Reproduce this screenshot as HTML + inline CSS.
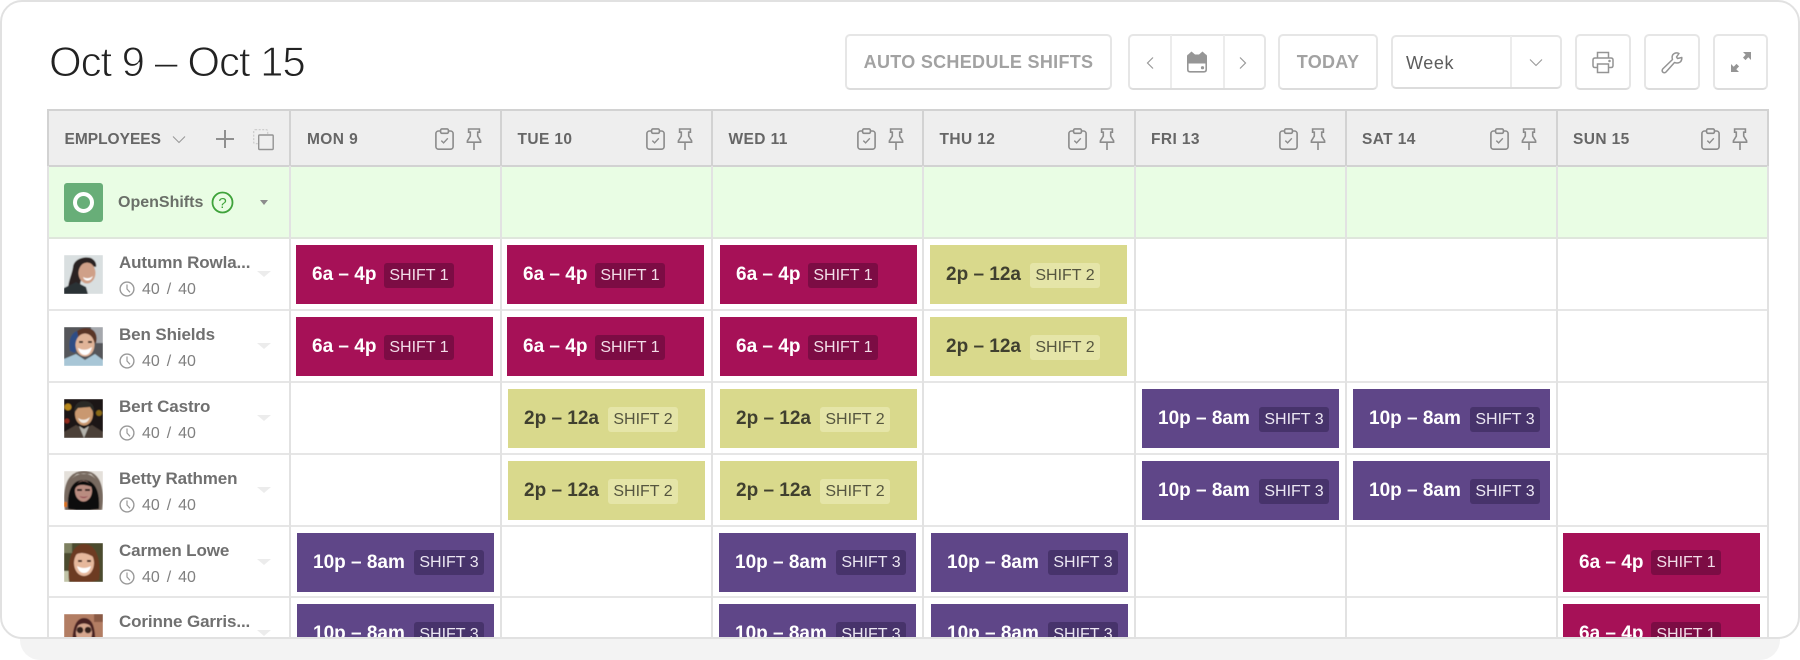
<!DOCTYPE html>
<html lang="en">
<head>
<meta charset="utf-8">
<title>Oct 9 – Oct 15</title>
<style>
html,body{margin:0;padding:0;width:1800px;height:660px;overflow:hidden;background:#fff;font-family:"Liberation Sans",sans-serif}
.a,.a *{box-sizing:border-box}
.a{position:absolute}
#stack{left:20px;top:600px;width:1760px;height:60px;background:#f3f3f3;border-radius:0 0 20px 20px}
#clip{left:0;top:0;width:1800px;height:637px;background:#fff;overflow:hidden;border-radius:22px 22px 20px 20px}
#frame{left:0;top:0;width:1800px;height:639px;border:2px solid #e1e1e1;border-radius:22px}
#title{left:49px;top:37px;font-size:42px;line-height:50px;letter-spacing:-1.08px;color:#222;white-space:nowrap;-webkit-text-stroke:1px #fff}
.btn{position:absolute;top:34px;height:56px;background:#fff;border:2px solid #e6e6e6;border-bottom-color:#dcdcdc;border-radius:5px;font-weight:bold;font-size:18px;line-height:52px;letter-spacing:.3px;color:#a2a2a2;text-align:center;white-space:nowrap}
.v{position:absolute;width:2px}
.h{position:absolute;left:48px;width:1720px;height:2px;background:#e6e6e6}
.dh{position:absolute;top:130px;font-size:15.5px;line-height:20px;font-weight:bold;color:#666;letter-spacing:.4px;white-space:nowrap}
.ic{position:absolute;overflow:visible}
.n{position:absolute;left:119px;font-size:17px;line-height:20px;font-weight:bold;color:#707070;letter-spacing:-.12px;white-space:nowrap}
.w{position:absolute;left:142px;font-size:16px;line-height:20px;color:#808080;word-spacing:2.5px;white-space:nowrap}
.ct{position:absolute;left:257px;width:0;height:0;border-left:7px solid transparent;border-right:7px solid transparent;border-top:6px solid #ececec}
.s{position:absolute;width:197px;height:59px;color:#fff}
.s b{position:absolute;left:16px;top:19px;font-size:19px;line-height:22px;font-weight:bold;white-space:nowrap}
.s i{position:absolute;top:17.5px;width:70px;height:25px;border-radius:3px;font-style:normal;font-size:16px;line-height:25px;text-align:center;letter-spacing:0;white-space:nowrap}
.m{background:#a61157}.m i{left:88px;background:#7c0c44;color:#f3dde8}
.p{background:#5f4688}.p i{left:117px;background:#47336b;color:#ebe6f2}
.y{background:#d9d98c;color:#40402f}.y i{left:100px;background:#e5e5a8;color:#55553f}
.av{position:absolute;left:64px;width:39px;height:39px;display:block}
</style>
</head>
<body>
<svg width="0" height="0" style="position:absolute">
<defs>
<filter id="bl" x="-5%" y="-5%" width="110%" height="110%"><feGaussianBlur stdDeviation=".5"/></filter>
<symbol id="clipb" viewBox="0 0 19 22"><rect x=".9" y="3" width="17.2" height="18.2" rx="2.6" fill="none" stroke="#8b8b8b" stroke-width="1.6"/><rect x="5.6" y=".9" width="7.8" height="4.4" rx="1.4" fill="#eee" stroke="#8b8b8b" stroke-width="1.6"/><path d="M6.3 12.6l2.3 2.3 4.2-4.6" fill="none" stroke="#8b8b8b" stroke-width="1.4"/></symbol>
<symbol id="pin" viewBox="0 0 16 22"><path d="M2.6 1h10.8v3.2h-1.7v4l2.9 4.6v1.4H1.4v-1.4l2.9-4.6v-4H2.6z" fill="none" stroke="#8b8b8b" stroke-width="1.6" stroke-linejoin="miter"/><path d="M8 14v8" stroke="#8b8b8b" stroke-width="1.6"/></symbol>
<symbol id="clock" viewBox="0 0 16 16"><circle cx="8" cy="8" r="6.9" fill="none" stroke="#999" stroke-width="1.4"/><path d="M8 3.5V8l3 3.3" fill="none" stroke="#999" stroke-width="1.2"/></symbol>
</defs>
</svg>

<div class="a" id="stack"></div>

<div class="a" id="clip">
<div class="a" id="title">Oct 9 – Oct 15</div>

<div class="btn" style="left:845px;width:267px">AUTO SCHEDULE SHIFTS</div>
<div class="btn" style="left:1128px;width:138px"></div>
<div class="a" style="left:1170px;top:35px;width:2px;height:53px;background:#ececec"></div>
<div class="a" style="left:1223px;top:35px;width:2px;height:53px;background:#ececec"></div>
<svg class="ic" style="left:1145px;top:56px" width="10" height="14"><path d="M8 1.5L2.500 7 8 12.500" fill="none" stroke="#999" stroke-width="1.200"/></svg>
<svg class="ic" style="left:1238px;top:56px" width="10" height="14"><path d="M2 1.5L7.500 7 2 12.500" fill="none" stroke="#999" stroke-width="1.200"/></svg>
<svg class="ic" style="left:1186px;top:51px" width="22" height="22"><path d="M1 12.500V5.500Q1 3.800 2.500 3.300L5.500 .5 9 3.500H13L16.500 .5 19.500 3.300Q21 3.800 21 5.500V12.500z" fill="#969696"/><path d="M1.800 12V18.500Q1.800 20.800 4 20.800H18Q20.200 20.800 20.200 18.500V12" fill="none" stroke="#969696" stroke-width="1.600"/><circle cx="16.500" cy="16.700" r="1.600" fill="#969696"/></svg>
<div class="btn" style="left:1278px;width:100px">TODAY</div>
<div class="btn" style="left:1391px;top:35px;width:171px;height:54px"></div>
<div class="a" style="left:1406px;top:51px;font-size:18px;line-height:24px;letter-spacing:.6px;color:#5c5c5c">Week</div>
<div class="a" style="left:1510px;top:36px;width:2px;height:51px;background:#ececec"></div>
<svg class="ic" style="left:1529px;top:58px" width="14" height="9"><path d="M1 1.500l6 6 6-6" fill="none" stroke="#999" stroke-width="1.100"/></svg>

<div class="btn" style="left:1575px;width:56px"></div>
<svg class="ic" style="left:1592px;top:51px" width="22" height="23" fill="none" stroke="#949494" stroke-width="1.500"><path d="M5.500 7V1.500H16.500V7"/><path d="M5 16.500H3Q1 16.500 1 14.500V9Q1 7 3 7H19Q21 7 21 9V14.500Q21 16.500 19 16.500H17"/><rect x="5.500" y="13" width="11" height="8.500"/><circle cx="17.500" cy="10" r=".5" fill="#949494"/></svg>
<div class="btn" style="left:1644px;width:56px"></div>
<svg class="ic" style="left:1661px;top:51px" width="22" height="23" fill="none" stroke="#949494" stroke-width="1.500" stroke-linejoin="round"><path d="M20.800 6.500L16.500 7.500 15.500 6 18 2.500Q14.500 .8 12 3.500Q10.500 5.500 11.500 8.500L1.700 18Q.5 20 2 21.300Q3.700 22.300 5 21L13.500 11.500Q17 12.800 19.500 10.800Q21 9 20.800 6.500z"/></svg>
<div class="btn" style="left:1713px;width:55px"></div>
<svg class="ic" style="left:1730px;top:51px" width="22" height="22" fill="#959595"><path d="M21 1V9L18.300 6.300 15.500 9.100 13 6.600 15.700 3.700 13 1z"/><path d="M1 21V13L3.700 15.700 6.500 12.900 9.100 15.400 6.300 18.300 9 21z"/></svg>

<!-- table backgrounds -->
<div class="a" style="left:48px;top:110px;width:1720px;height:56px;background:#eee"></div>
<div class="a" style="left:48px;top:166px;width:1720px;height:72px;background:#e9fde4"></div>

<!-- header lines -->
<div class="a" style="left:47px;top:109px;width:1722px;height:2px;background:#d2d2d2"></div>
<div class="a" style="left:47px;top:165px;width:1722px;height:2px;background:#d2d2d2"></div>

<!-- row lines -->
<div class="h" style="top:237px;background:#dfe6dc"></div>
<div class="h" style="top:309px"></div>
<div class="h" style="top:381px"></div>
<div class="h" style="top:453px"></div>
<div class="h" style="top:525px"></div>
<div class="h" style="top:596px"></div>

<!-- vertical lines header -->
<div class="v" style="left:47px;top:110px;height:56px;background:#d2d2d2"></div>
<div class="v" style="left:289px;top:110px;height:56px;background:#d2d2d2"></div>
<div class="v" style="left:500px;top:110px;height:56px;background:#d2d2d2"></div>
<div class="v" style="left:711px;top:110px;height:56px;background:#d2d2d2"></div>
<div class="v" style="left:922px;top:110px;height:56px;background:#d2d2d2"></div>
<div class="v" style="left:1134px;top:110px;height:56px;background:#d2d2d2"></div>
<div class="v" style="left:1345px;top:110px;height:56px;background:#d2d2d2"></div>
<div class="v" style="left:1556px;top:110px;height:56px;background:#d2d2d2"></div>
<div class="v" style="left:1767px;top:110px;height:56px;background:#d2d2d2"></div>
<!-- vertical lines body -->
<div class="v" style="left:47px;top:166px;height:480px;background:#e2e2e2"></div>
<div class="v" style="left:289px;top:166px;height:480px;background:#e2e2e2"></div>
<div class="v" style="left:500px;top:166px;height:480px;background:#e2e2e2"></div>
<div class="v" style="left:711px;top:166px;height:480px;background:#e2e2e2"></div>
<div class="v" style="left:922px;top:166px;height:480px;background:#e2e2e2"></div>
<div class="v" style="left:1134px;top:166px;height:480px;background:#e2e2e2"></div>
<div class="v" style="left:1345px;top:166px;height:480px;background:#e2e2e2"></div>
<div class="v" style="left:1556px;top:166px;height:480px;background:#e2e2e2"></div>
<div class="v" style="left:1767px;top:166px;height:480px;background:#e2e2e2"></div>

<!-- header content -->
<div class="dh" style="left:64.500px;font-size:15.500px;letter-spacing:0">EMPLOYEES</div>
<svg class="ic" style="left:172px;top:135px" width="14" height="9"><path d="M1 1.500l6 6 6-6" fill="none" stroke="#999" stroke-width="1.100"/></svg>
<svg class="ic" style="left:216px;top:130px" width="18" height="18"><path d="M9 0V18M0 9H18" stroke="#8f8f8f" stroke-width="2"/></svg>
<svg class="ic" style="left:253px;top:129px" width="21" height="21" fill="none"><rect x=".7" y=".7" width="14" height="14" rx="1.500" stroke="#cacaca" stroke-width="1.200" stroke-dasharray="2 1.500"/><rect x="5.700" y="6" width="14.500" height="14.500" fill="#eee" stroke="#939393" stroke-width="1.400" rx="1"/></svg>

<div class="dh" style="left:307px">MON 9</div>
<div class="dh" style="left:517.500px">TUE 10</div>
<div class="dh" style="left:728.500px">WED 11</div>
<div class="dh" style="left:939.500px">THU 12</div>
<div class="dh" style="left:1151px">FRI 13</div>
<div class="dh" style="left:1362px">SAT 14</div>
<div class="dh" style="left:1573px">SUN 15</div>

<svg class="ic" style="left:435px;top:128px" width="19" height="22"><use href="#clipb"/></svg><svg class="ic" style="left:466px;top:128px" width="16" height="22"><use href="#pin"/></svg>
<svg class="ic" style="left:646px;top:128px" width="19" height="22"><use href="#clipb"/></svg><svg class="ic" style="left:677px;top:128px" width="16" height="22"><use href="#pin"/></svg>
<svg class="ic" style="left:857px;top:128px" width="19" height="22"><use href="#clipb"/></svg><svg class="ic" style="left:888px;top:128px" width="16" height="22"><use href="#pin"/></svg>
<svg class="ic" style="left:1068px;top:128px" width="19" height="22"><use href="#clipb"/></svg><svg class="ic" style="left:1099px;top:128px" width="16" height="22"><use href="#pin"/></svg>
<svg class="ic" style="left:1279px;top:128px" width="19" height="22"><use href="#clipb"/></svg><svg class="ic" style="left:1310px;top:128px" width="16" height="22"><use href="#pin"/></svg>
<svg class="ic" style="left:1490px;top:128px" width="19" height="22"><use href="#clipb"/></svg><svg class="ic" style="left:1521px;top:128px" width="16" height="22"><use href="#pin"/></svg>
<svg class="ic" style="left:1701px;top:128px" width="19" height="22"><use href="#clipb"/></svg><svg class="ic" style="left:1732px;top:128px" width="16" height="22"><use href="#pin"/></svg>

<!-- OpenShifts -->
<div class="a" style="left:64px;top:183px;width:39px;height:39px;background:#68ae78;border-radius:3px"></div>
<div class="a" style="left:73px;top:192px;width:21px;height:21px;border:4px solid #fff;border-radius:50%"></div>
<div class="a" style="left:118px;top:193px;font-size:16px;line-height:20px;font-weight:bold;color:#6a6f68">OpenShifts</div>
<svg class="ic" style="left:211px;top:191px" width="23" height="23"><circle cx="11.500" cy="11.500" r="10" fill="none" stroke="#3fa33b" stroke-width="1.800"/><text x="11.500" y="17" text-anchor="middle" font-family="Liberation Sans, sans-serif" font-size="15" fill="#3fa33b">?</text></svg>
<div class="a" style="left:260px;top:200px;width:0;height:0;border-left:4.500px solid transparent;border-right:4.500px solid transparent;border-top:5px solid #8c8c8c"></div>

<!-- Employees -->
<svg class="av" style="top:255px" viewBox="0 0 39 39"><g filter="url(#bl)"><rect width="39" height="39" fill="#d9dfe0"/><path d="M4 39C3 28 8 20 9 12C10 4 20 1 27 3C31 5 33 9 32 12L20 10L16 30L20 39z" fill="#2a2320"/><ellipse cx="23" cy="18" rx="8.500" ry="10.500" fill="#cfa088"/><path d="M14 13Q22 3 31 11Q28 3 21 3Q15 4 14 13z" fill="#2a2320"/><path d="M19 22Q24 25 29 21Q27 26 23 25.500Q20 25 19 22z" fill="#fff"/><path d="M0 39V33L12 27L22 32L24 39z" fill="#2a3036"/></g></svg>
<svg class="av" style="top:327px" viewBox="0 0 39 39"><g filter="url(#bl)"><rect width="39" height="39" fill="#55565a"/><rect x="27" width="12" height="16" fill="#a5a8ad"/><path d="M8 20C6 8 14 1 22 1C32 1 34 10 32 16L12 14z" fill="#5a3526"/><path d="M6 24C4 14 7 6 13 4L15 13L11 26z" fill="#2f4e85"/><ellipse cx="21" cy="18" rx="9.500" ry="11.500" fill="#e0b498"/><path d="M14 21Q21 25 28 20Q26 28 21 28Q16 28 14 21z" fill="#fff"/><rect x="15" y="14" width="4" height="2" fill="#3a2a22"/><rect x="24" y="14" width="4" height="2" fill="#3a2a22"/><path d="M0 39V32L12 27L21 33L31 27L39 33V39z" fill="#a8c6d6"/></g></svg>
<svg class="av" style="top:399px" viewBox="0 0 39 39"><g filter="url(#bl)"><rect width="39" height="39" fill="#1a1512"/><circle cx="4" cy="8" r="3.500" fill="#b8881f"/><circle cx="35" cy="14" r="3" fill="#8a6a18"/><circle cx="3" cy="22" r="2.500" fill="#902a1a"/><ellipse cx="20" cy="15" rx="9" ry="11.500" fill="#c9986f"/><path d="M10 14Q10 2 20 2Q31 2 30 14L26 8L14 9z" fill="#2b2928"/><path d="M14 19Q20 23 26 18Q24 24 20 24Q16 24 14 19z" fill="#f3ece4"/><path d="M0 39V33L12 26L20 30L28 26L39 33V39z" fill="#4b3f38"/><path d="M15 27L20 39L25 27L20 30z" fill="#b4b2ab"/></g></svg>
<svg class="av" style="top:471px" viewBox="0 0 39 39"><g filter="url(#bl)"><rect width="39" height="39" fill="#e4e0da"/><path d="M1 39C-2 18 2 0 20 0C37 0 41 18 38 39z" fill="#77695f"/><path d="M7 8Q20 -3 32 8L27 3H13z" fill="#cfc8bf"/><path d="M4 38C3 22 7 9 19.500 9C32 9 36 22 35 38L25 39H13z" fill="#0f0c0b"/><ellipse cx="19.500" cy="20" rx="8.500" ry="10.500" fill="#b98c80"/><path d="M11 18Q14 11 28 16Q25 10 19 10Q12 11 11 18z" fill="#0f0c0b"/><rect x="13" y="18" width="5" height="2" fill="#2a1a1a"/><rect x="21" y="18" width="5" height="2" fill="#2a1a1a"/><path d="M15 25Q20 29 24 25Q20 27 15 25z" fill="#8c2f44"/><rect x="0" y="31" width="3" height="5" fill="#d8701c"/></g></svg>
<svg class="av" style="top:543px" viewBox="0 0 39 39"><g filter="url(#bl)"><rect width="39" height="39" fill="#4b4b2e"/><rect width="8" height="10" fill="#7d8060"/><rect x="0" y="28" width="5" height="11" fill="#c1c4a8"/><path d="M5 38C3 20 7 1 20 1C34 1 37 20 35 37L27 39H12z" fill="#6d3b22"/><ellipse cx="20" cy="20" rx="10" ry="13" fill="#e6b89c"/><path d="M10 13Q18 6 31 15Q30 4 20 3Q11 4 10 13z" fill="#6d3b22"/><path d="M13 23Q20 27 27 23Q25 30 20 30Q15 30 13 23z" fill="#fff"/><rect x="14" y="17" width="4" height="2" fill="#3a2218"/><rect x="23" y="17" width="4" height="2" fill="#3a2218"/></g></svg>
<svg class="av" style="top:614px" viewBox="0 0 39 39"><g filter="url(#bl)"><rect width="39" height="39" fill="#b27d63"/><rect x="30" width="9" height="8" fill="#8a5a44"/><path d="M9 38C7 20 10 4 20 4C31 4 32 20 31 38z" fill="#4a2222"/><ellipse cx="20" cy="19" rx="8" ry="11" fill="#d6a68e"/><path d="M12 13Q20 6 28 13Q26 7 20 7Q14 7 12 13z" fill="#4a2222"/><circle cx="16" cy="16" r="3.300" fill="#35201c"/><circle cx="24" cy="16" r="3.300" fill="#35201c"/></g></svg>

<div class="n" style="top:253px">Autumn Rowla...</div><div class="n" style="top:325px">Ben Shields</div><div class="n" style="top:397px">Bert Castro</div><div class="n" style="top:469px">Betty Rathmen</div><div class="n" style="top:541px">Carmen Lowe</div><div class="n" style="top:612px">Corinne Garris...</div>

<div class="w" style="top:280px">40 / 40</div><div class="w" style="top:352px">40 / 40</div><div class="w" style="top:424px">40 / 40</div><div class="w" style="top:496px">40 / 40</div><div class="w" style="top:568px">40 / 40</div>
<svg class="ic" style="left:119px;top:281px" width="16" height="16"><use href="#clock"/></svg>
<svg class="ic" style="left:119px;top:353px" width="16" height="16"><use href="#clock"/></svg>
<svg class="ic" style="left:119px;top:425px" width="16" height="16"><use href="#clock"/></svg>
<svg class="ic" style="left:119px;top:497px" width="16" height="16"><use href="#clock"/></svg>
<svg class="ic" style="left:119px;top:569px" width="16" height="16"><use href="#clock"/></svg>

<div class="ct" style="top:271px"></div><div class="ct" style="top:343px"></div><div class="ct" style="top:415px"></div><div class="ct" style="top:487px"></div><div class="ct" style="top:559px"></div><div class="ct" style="top:630px"></div>

<!-- Shifts -->
<div class="s m" style="left:296px;top:245px"><b>6a – 4p</b><i>SHIFT 1</i></div>
<div class="s m" style="left:507px;top:245px"><b>6a – 4p</b><i>SHIFT 1</i></div>
<div class="s m" style="left:720px;top:245px"><b>6a – 4p</b><i>SHIFT 1</i></div>
<div class="s y" style="left:930px;top:245px"><b>2p – 12a</b><i>SHIFT 2</i></div>

<div class="s m" style="left:296px;top:317px"><b>6a – 4p</b><i>SHIFT 1</i></div>
<div class="s m" style="left:507px;top:317px"><b>6a – 4p</b><i>SHIFT 1</i></div>
<div class="s m" style="left:720px;top:317px"><b>6a – 4p</b><i>SHIFT 1</i></div>
<div class="s y" style="left:930px;top:317px"><b>2p – 12a</b><i>SHIFT 2</i></div>

<div class="s y" style="left:508px;top:389px"><b>2p – 12a</b><i>SHIFT 2</i></div>
<div class="s y" style="left:720px;top:389px"><b>2p – 12a</b><i>SHIFT 2</i></div>
<div class="s p" style="left:1142px;top:389px"><b>10p – 8am</b><i>SHIFT 3</i></div>
<div class="s p" style="left:1353px;top:389px"><b>10p – 8am</b><i>SHIFT 3</i></div>

<div class="s y" style="left:508px;top:461px"><b>2p – 12a</b><i>SHIFT 2</i></div>
<div class="s y" style="left:720px;top:461px"><b>2p – 12a</b><i>SHIFT 2</i></div>
<div class="s p" style="left:1142px;top:461px"><b>10p – 8am</b><i>SHIFT 3</i></div>
<div class="s p" style="left:1353px;top:461px"><b>10p – 8am</b><i>SHIFT 3</i></div>

<div class="s p" style="left:297px;top:532.500px"><b>10p – 8am</b><i>SHIFT 3</i></div>
<div class="s p" style="left:719px;top:532.500px"><b>10p – 8am</b><i>SHIFT 3</i></div>
<div class="s p" style="left:931px;top:532.500px"><b>10p – 8am</b><i>SHIFT 3</i></div>
<div class="s m" style="left:1563px;top:532.500px"><b>6a – 4p</b><i>SHIFT 1</i></div>

<div class="s p" style="left:297px;top:604px"><b>10p – 8am</b><i>SHIFT 3</i></div>
<div class="s p" style="left:719px;top:604px"><b>10p – 8am</b><i>SHIFT 3</i></div>
<div class="s p" style="left:931px;top:604px"><b>10p – 8am</b><i>SHIFT 3</i></div>
<div class="s m" style="left:1563px;top:604px"><b>6a – 4p</b><i>SHIFT 1</i></div>
</div>

<div class="a" id="frame"></div>
</body>
</html>
